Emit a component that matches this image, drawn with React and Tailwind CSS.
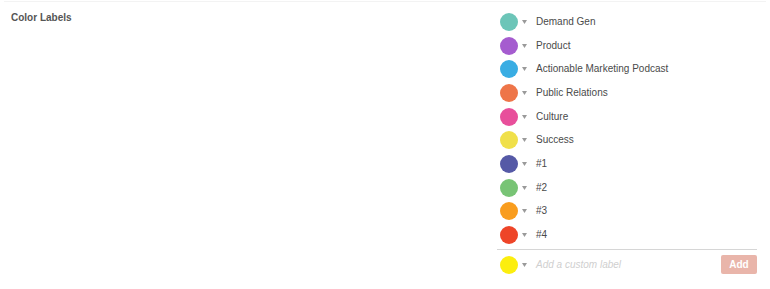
import React from "react";

const labels = [
  { name: "Demand Gen", color: "#6cc5b8" },
  { name: "Product", color: "#a55ccf" },
  { name: "Actionable Marketing Podcast", color: "#39ade3" },
  { name: "Public Relations", color: "#ee7549" },
  { name: "Culture", color: "#e84f9b" },
  { name: "Success", color: "#f0e04a" },
  { name: "#1", color: "#5559a6" },
  { name: "#2", color: "#78c475" },
  { name: "#3", color: "#f99d1e" },
  { name: "#4", color: "#ee4528" },
];

function Caret() {
  return (
    <svg width="5" height="4" viewBox="0 0 5 4" className="ml-[3.5px] shrink-0">
      <path d="M0 0 L5 0 L2.5 4 Z" fill="#9a9a9a" />
    </svg>
  );
}

export default function App() {
  return (
    <div className="w-[770px] h-[289px] bg-white font-['Liberation_Sans',Arial,sans-serif]">
      <div className="mx-[4px] mt-[1px] border-t border-[#f3f3f3] flex">
        <div className="w-[493px] pl-[7px] pt-[9.5px] text-[10px] leading-[12px] font-bold text-[#555]">
          Color Labels
        </div>
        <div className="w-[260px] pt-[8px]">
          {labels.map((l) => (
            <div key={l.name} className="flex items-center h-[23.7px] pl-[3px]">
              <div
                className="w-[18px] h-[18px] rounded-full shrink-0"
                style={{ backgroundColor: l.color }}
              />
              <Caret />
              <span className="ml-[9.5px] text-[10px] text-[#4a4a4a] leading-[12px]">{l.name}</span>
            </div>
          ))}
          <div className="mt-[2px] border-t border-[#d6d6d6] flex items-center h-[31px] pl-[3px]">
            <div className="w-[18px] h-[18px] rounded-full shrink-0 bg-[#fcee0f]" />
            <Caret />
            <span className="ml-[9.5px] text-[10px] italic text-[#cfcfcf] leading-[12px]">
              Add a custom label
            </span>
            <div className="ml-auto w-[36px] h-[19px] rounded-[2px] bg-[#e9b5aa] text-white text-[10px] font-bold flex items-center justify-center">
              Add
            </div>
          </div>
        </div>
      </div>
    </div>
  );
}
